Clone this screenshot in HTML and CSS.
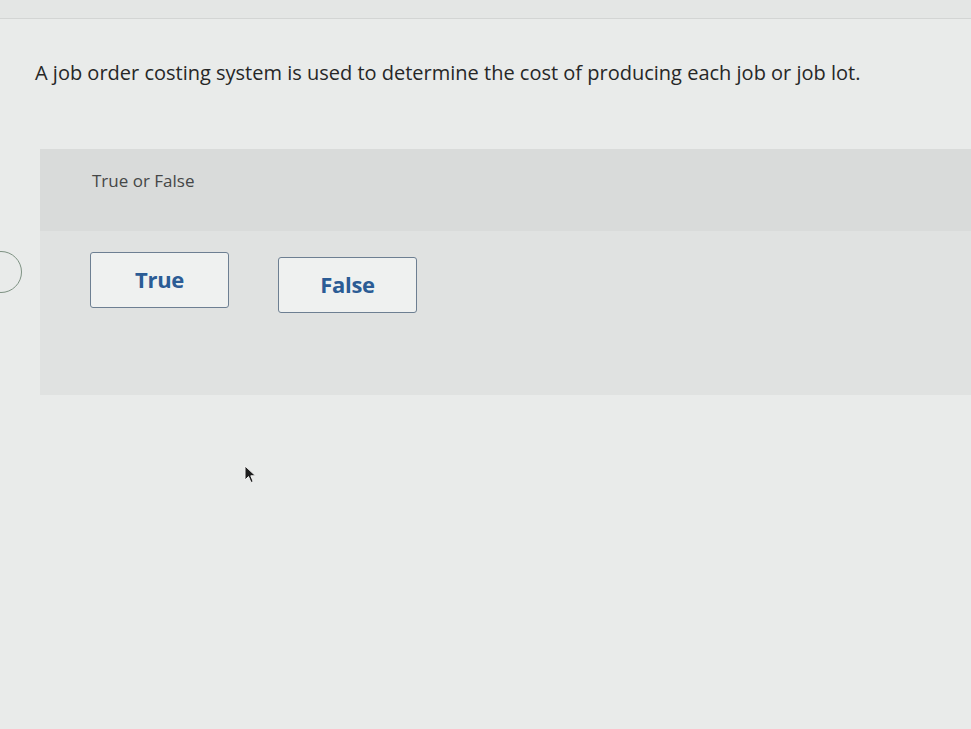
FILE: index.html
```html
<!DOCTYPE html>
<html lang="en">
  <head>
    <meta charset="UTF-8" />
    <meta name="viewport" content="width=device-width, initial-scale=1.0" />
    <title>True or False</title>
    <link rel="stylesheet" href="styles.css">
  </head>
  <body>
    <div class="topbar"></div>

    <div class="page">
      <p class="question">
        A job order costing system is used to determine the cost of producing each job or job lot.
      </p>

      <div class="panel">
        <span class="step-marker"></span>
        <div class="panel-head">True or False</div>
        <div class="panel-body">
          <div class="button-group">
            <button class="answer">True</button>
            <button class="answer answer-low">False</button>
          </div>
        </div>
      </div>
    </div>

    <!-- mouse pointer -->
    <svg class="pointer" width="14" height="20" viewBox="0 0 14 20">
      <path d="M1 1 L1 15 L4.5 11.5 L7 17.5 L9.2 16.6 L6.8 10.8 L11.5 10.8 Z"
        fill="#1e1e1e" stroke="#f2f2f2" stroke-width="1" />
    </svg>
  </body>
</html>
```

FILE: styles.css
```css
body {
  margin: 0;
  background-color: #e9ebea;
  font-family: "Open Sans", "Lato", sans-serif;
  color: #2b2c2c;
  position: relative;
  min-height: 729px;
  overflow: hidden;
}
.topbar {
  height: 18px;
  background-color: #e4e6e5;
  border-bottom: 1px solid #d3d5d4;
}
.page {
  padding-left: 35px;
}
.question {
  margin: 0;
  padding-top: 40px;
  font-size: 20px;
  color: #262727;
}
.panel {
  position: relative;
  margin-top: 63px;
  margin-left: 5px;
  background-color: #e0e2e1;
  height: 246px;
}
.panel-head {
  background-color: #d9dbda;
  height: 82px;
  padding-left: 52px;
  padding-top: 20px;
  box-sizing: border-box;
  font-size: 17px;
  color: #454747;
}
.panel-body {
  padding-left: 50px;
  padding-top: 21px;
}
.button-group {
  display: flex;
  align-items: flex-start;
  gap: 49px;
}
.answer {
  width: 139px;
  height: 56px;
  background-color: #eff1f0;
  border: 1.5px solid #6d7f92;
  border-radius: 3px;
  font-family: "Open Sans", "Lato", sans-serif;
  font-weight: 700;
  font-size: 22px;
  letter-spacing: -0.3px;
  color: #2b5c95;
  cursor: pointer;
  padding-bottom: 4px;
}
.answer-low {
  margin-top: 5px;
}
.step-marker {
  position: absolute;
  left: -60px;
  top: 102px;
  width: 40px;
  height: 40px;
  border: 1.5px solid #7e9283;
  border-radius: 50%;
  background-color: #e9ebea;
}
.pointer {
  position: absolute;
  left: 244px;
  top: 465px;
}
```
